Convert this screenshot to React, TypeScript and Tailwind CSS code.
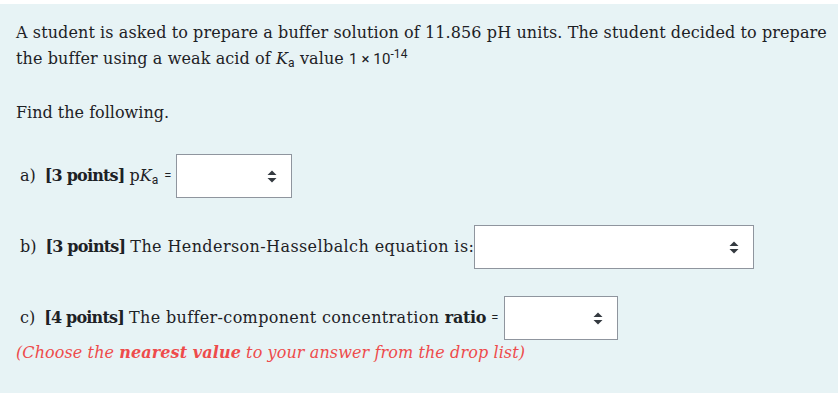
import React from "react";

const serif = "font-['DejaVu_Serif',serif]";

function SelectBox({ width }: { width: string }) {
  return (
    <div
      className={`${width} h-[44px] bg-white border border-[#8f959e] flex items-center justify-end pr-[14px] shrink-0`}
    >
      <svg width="10" height="13" viewBox="0 0 10 13">
        <path d="M5 0.5 L9.5 5 L0.5 5 Z" fill="#343a40" />
        <path d="M0.5 8 L9.5 8 L5 12.5 Z" fill="#343a40" />
      </svg>
    </div>
  );
}

function Ka() {
  return (
    <span>
      <i className="font-['DejaVu_Serif',serif]">K</i>
      <sub className="text-[12px] font-['Roboto',sans-serif]">a</sub>
    </span>
  );
}

export default function App() {
  return (
    <div className="w-[838px] h-[402px] bg-white pt-[4px]">
      <div
        className={`bg-[#e7f3f5] h-[389px] pl-[16px] pt-[16px] text-[#1d2125] text-[16px] leading-[26px] ${serif}`}
      >
        <p className="tracking-[0.1px]">
          A student is asked to prepare a buffer solution of 11.856 pH units. The student decided to prepare
          <br />
          the buffer using a weak acid of <Ka /> value{" "}
          <span className="font-['Roboto',sans-serif] text-[15px]">
            1 × 10<sup className="text-[12px]">-14</sup>
          </span>
        </p>

        <p className="mt-[28px]">Find the following.</p>

        <div className="mt-[28px] flex items-center pl-[4px]">
          <span>a)</span>
          <span className="ml-[9px] font-bold tracking-[-0.8px]">[3 points]</span>
          <span className="ml-[5px]">
            p<Ka />
          </span>
          <span className="ml-[6px] mr-[5px] font-['Roboto',sans-serif] text-[13px]">=</span>
          <SelectBox width="w-[116px]" />
        </div>

        <div className="mt-[27px] flex items-center pl-[4px]">
          <span>b)</span>
          <span className="ml-[9px] font-bold tracking-[-0.8px]">[3 points]</span>
          <span className="ml-[5px] tracking-[0.4px]">The Henderson-Hasselbalch equation is:</span>
          <SelectBox width="w-[280px]" />
        </div>

        <div className="mt-[27px] flex items-center pl-[4px]">
          <span>c)</span>
          <span className="ml-[9px] font-bold tracking-[-0.8px]">[4 points]</span>
          <span className="ml-[5px] tracking-[0.35px]">
            The buffer-component concentration <b className="tracking-[-0.3px]">ratio</b>
          </span>
          <span className="ml-[5px] mr-[6px] font-['Roboto',sans-serif] text-[13px]">=</span>
          <SelectBox width="w-[114px]" />
        </div>

        <p className="italic text-[#ee4b4b] tracking-[0.1px]">
          (Choose the <b>nearest value</b> to your answer from the drop list)
        </p>
      </div>
    </div>
  );
}
